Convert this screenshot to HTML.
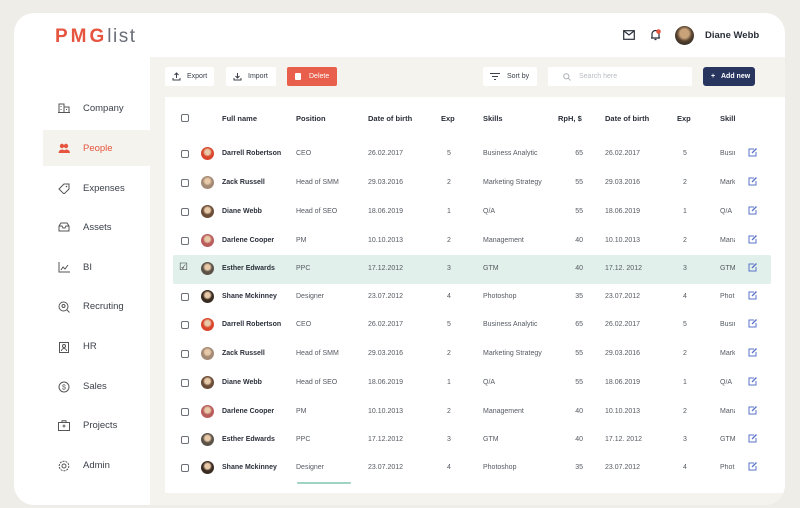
<!DOCTYPE html><html><head><style>
*{margin:0;padding:0;box-sizing:border-box}
body{width:800px;height:508px;background:#eeede8;font-family:"Liberation Sans",sans-serif;position:relative;overflow:hidden;color:#2a2f3a}
.card{position:absolute;left:14px;top:13px;width:771px;height:492px;background:#fff;border-radius:20px;overflow:hidden}
.main{position:absolute;left:136px;top:44px;right:0;bottom:0;background:#f4f3ee}
.abs{position:absolute}
.logo{left:41px;top:13px;font-size:19px;letter-spacing:2px}
.logo b{color:#e5553f;letter-spacing:3px}
.logo span{color:#6a6e76;font-weight:300;letter-spacing:1.5px}
.nav{left:0;width:136px;height:36px;font-size:9.5px;color:#3b404a}
.nav .t{position:absolute;left:69px;top:13px}
.nav svg{position:absolute;left:44px;top:13px}
.btn{background:#fff;height:19px;border-radius:2px;font-size:7px;color:#3b404a;line-height:19px}
.tbl{position:absolute;left:151px;top:84px;right:0;bottom:12px;background:#fff}
.r{position:absolute;left:0;right:0;height:28px;font-size:7px;color:#555a62}
.r div{position:absolute;top:10px;white-space:nowrap}
.h div{font-weight:bold;color:#2a2f3a;font-size:7.5px}
.cb{width:8px;height:8px;border:1px solid #6b6f77;border-radius:2px;top:10px!important}
.av{width:13px;height:13px;border-radius:50%;top:7px!important}
.nm{font-weight:bold;color:#2a2f3a}
</style></head><body>
<div class="card">
<div class="abs logo"><b>PMG</b><span>list</span></div>
<svg class="abs" style="left:609px;top:17px" width="12" height="10" viewBox="0 0 12 10"><rect x="0.7" y="0.7" width="10.6" height="8.6" fill="none" stroke="#2a2f3a" stroke-width="1.2"/><path d="M1 1l5 4 5-4" fill="none" stroke="#2a2f3a" stroke-width="1.2"/></svg>
<svg class="abs" style="left:636px;top:16px" width="11" height="12" viewBox="0 0 11 12"><path d="M2 9V5a3.5 3.5 0 0 1 7 0v4h1H1zM4.5 10.5h2" fill="none" stroke="#2a2f3a" stroke-width="1.2"/><circle cx="8.5" cy="2.5" r="2.3" fill="#e5553f"/></svg>
<div class="abs" style="left:661px;top:13px;width:19px;height:19px;border-radius:50%;background:radial-gradient(circle at 50% 40%,#c9a27a 0 30%,#5a4430 50%,#2e2a22 80%)"></div>
<div class="abs" style="left:691px;top:17px;font-size:9.5px;font-weight:bold;color:#2a2f3a">Diane Webb</div>

<div class="abs nav" style="top:77px"><svg width="12" height="10"><path d="M1 9.5V1h5v8.5M6 4h5v5.5M0 9.5h12M3 3v1M3 6v1M8.5 6v1" fill="none" stroke="#555" stroke-width="1"/></svg><span class="t">Company</span></div>
<div class="abs nav" style="top:117px;left:29px;width:107px;background:#f4f3ee;color:#e5553f"><svg style="left:15px" width="12" height="10"><circle cx="4" cy="3" r="2.2" fill="#e5553f"/><circle cx="8" cy="3" r="2.2" fill="#e5553f"/><path d="M0.5 10a3.5 3.5 0 0 1 7 0zM5 10a3.5 3.5 0 0 1 7 0z" fill="#e5553f"/></svg><span class="t" style="left:40px">People</span></div>
<div class="abs nav" style="top:157px"><svg width="12" height="11"><path d="M6 1h5v5L6 11 1 6z" fill="none" stroke="#555"/><circle cx="8.5" cy="3.5" r=".8" fill="#555"/></svg><span class="t">Expenses</span></div>
<div class="abs nav" style="top:196px"><svg width="12" height="10"><path d="M1 4l2-3h6l2 3v5H1zM1 4h3l1 2h2l1-2h3" fill="none" stroke="#555"/></svg><span class="t">Assets</span></div>
<div class="abs nav" style="top:236px"><svg width="12" height="11"><path d="M1 0v10h11M3 8l2-3 2 2 3-4" fill="none" stroke="#555"/></svg><span class="t">BI</span></div>
<div class="abs nav" style="top:275px"><svg width="12" height="12"><circle cx="5.5" cy="5.5" r="4.5" fill="none" stroke="#555"/><circle cx="5.5" cy="5" r="1.5" fill="none" stroke="#555"/><path d="M9 9l2.5 2.5" stroke="#555"/></svg><span class="t">Recruting</span></div>
<div class="abs nav" style="top:315px"><svg width="12" height="12"><rect x="1.5" y="1.5" width="9" height="10" fill="none" stroke="#555"/><circle cx="6" cy="5" r="1.5" fill="none" stroke="#555"/><path d="M3.5 10a2.5 2.5 0 0 1 5 0" fill="none" stroke="#555"/></svg><span class="t">HR</span></div>
<div class="abs nav" style="top:355px"><svg width="12" height="12"><circle cx="6" cy="6" r="5" fill="none" stroke="#555"/><text x="6" y="8.5" font-size="7" text-anchor="middle" fill="#555" font-family="Liberation Sans">$</text></svg><span class="t">Sales</span></div>
<div class="abs nav" style="top:394px"><svg width="12" height="11"><rect x="0.5" y="2.5" width="11" height="8" fill="none" stroke="#555"/><path d="M4 2.5V.8h4v1.7M6 4.5v3M4.5 6h3" fill="none" stroke="#555"/></svg><span class="t">Projects</span></div>
<div class="abs nav" style="top:434px"><svg width="12" height="12"><circle cx="6" cy="6" r="4.8" fill="none" stroke="#555" stroke-dasharray="2 1"/><circle cx="6" cy="6" r="2" fill="none" stroke="#555"/></svg><span class="t">Admin</span></div>

<div class="main"></div>
<div class="abs btn" style="left:151px;top:54px;width:49px"><svg style="position:absolute;left:7px;top:5px" width="9" height="9"><path d="M4.5 6V1M2.5 3l2-2 2 2M1 6v2h7V6" fill="none" stroke="#3b404a"/></svg><span style="position:absolute;left:22px">Export</span></div>
<div class="abs btn" style="left:212px;top:54px;width:50px"><svg style="position:absolute;left:7px;top:5px" width="9" height="9"><path d="M4.5 1v5M2.5 4l2 2 2-2M1 6v2h7V6" fill="none" stroke="#3b404a"/></svg><span style="position:absolute;left:22px">Import</span></div>
<div class="abs btn" style="left:273px;top:54px;width:50px;background:#e8604c;color:#fff"><span style="position:absolute;left:8px;top:6px;width:6px;height:7px;background:#fff;border-radius:1px"></span><span style="position:absolute;left:22px">Delete</span></div>
<div class="abs btn" style="left:469px;top:54px;width:54px"><svg style="position:absolute;left:7px;top:6px" width="10" height="7"><path d="M0 .5h10M2 3.5h6M4 6.5h2" stroke="#3b404a"/></svg><span style="position:absolute;left:24px">Sort by</span></div>
<div class="abs btn" style="left:534px;top:54px;width:144px;color:#b9bcc2"><svg style="position:absolute;left:15px;top:6px" width="8" height="8"><circle cx="3.3" cy="3.3" r="2.6" fill="none" stroke="#b0b3b8"/><path d="M5.3 5.3l2.2 2.2" stroke="#b0b3b8"/></svg><span style="position:absolute;left:31px">Search here</span></div>
<div class="abs btn" style="left:689px;top:54px;width:52px;background:#27355f;color:#fff;font-weight:bold;border-radius:3px"><span style="position:absolute;left:8px">+</span><span style="position:absolute;left:18px">Add new</span></div>

<div class="tbl">
<div class="r h" style="top:7px"><div class="cb" style="left:16px"></div><div style="left:57px">Full name</div><div style="left:131px">Position</div><div style="left:203px">Date of birth</div><div style="left:276px">Exp</div><div style="left:318px">Skills</div><div style="left:393px">RpH, $</div><div style="left:440px">Date of birth</div><div style="left:512px">Exp</div><div style="left:555px;width:15px;overflow:hidden">Skills</div></div>
</div>
<div id="rows"></div>
</div>
<script>
var d=[["Darrell Robertson","CEO","26.02.2017","5","Business Analytic","65","Busir","#d9462c"],["Zack Russell","Head of SMM","29.03.2016","2","Marketing Strategy","55","Mark","#a48a74"],["Diane Webb","Head of SEO","18.06.2019","1","Q/A","55","Q/A","#6b4d38"],["Darlene Cooper","PM","10.10.2013","2","Management","40","Mana","#b85c5c"],["Esther Edwards","PPC","17.12.2012","3","GTM","40","GTM","#5b5248"],["Shane Mckinney","Designer","23.07.2012","4","Photoshop","35","Phot","#3b2c22"]];
var ys=[141,170,199,228,256,284,312,341,370,399,427,455];var h="";
ys.forEach(function(y,i){var r=d[i%6];var sel=i==4;var dob2=r[2]=="17.12.2012"?"17.12. 2012":r[2];
h+='<div class="r" style="top:'+(y-14)+'px;left:151px;right:0'+'">'+(sel?'<div style="left:8px;top:0px;width:598px;height:29px;background:#e1f0ea;border-radius:2px"></div>':'')+
(sel?'<div style="left:14px;top:7px;font-size:10px;color:#333">☑</div>':'<div class="cb" style="left:16px"></div>')+
'<div class="av" style="left:36px;background:radial-gradient(circle at 50% 40%,#e8c9a8 0 25%,'+r[7]+' 45%)"></div><div class="nm" style="left:57px">'+r[0]+'</div><div style="left:131px">'+r[1]+'</div><div style="left:203px">'+r[2]+'</div><div style="left:282px">'+r[3]+'</div><div style="left:318px">'+r[4]+'</div><div style="left:400px;width:18px;text-align:right">'+r[5]+'</div><div style="left:440px">'+dob2+'</div><div style="left:518px">'+r[3]+'</div><div style="left:555px;width:15px;overflow:hidden">'+r[6]+'</div><div style="left:583px;top:8px"><svg width="9" height="9"><path d="M6 1H1v7h7V4" fill="none" stroke="#5a73c8"/><path d="M4 5l4.5-4.5" stroke="#5a73c8" stroke-width="1.3"/></svg></div></div>';});
document.getElementById("rows").outerHTML=h+'<div class="abs" style="left:283px;top:469px;width:54px;height:2px;background:#9fd3c3;border-radius:1px"></div>';
</script>
</body></html>
